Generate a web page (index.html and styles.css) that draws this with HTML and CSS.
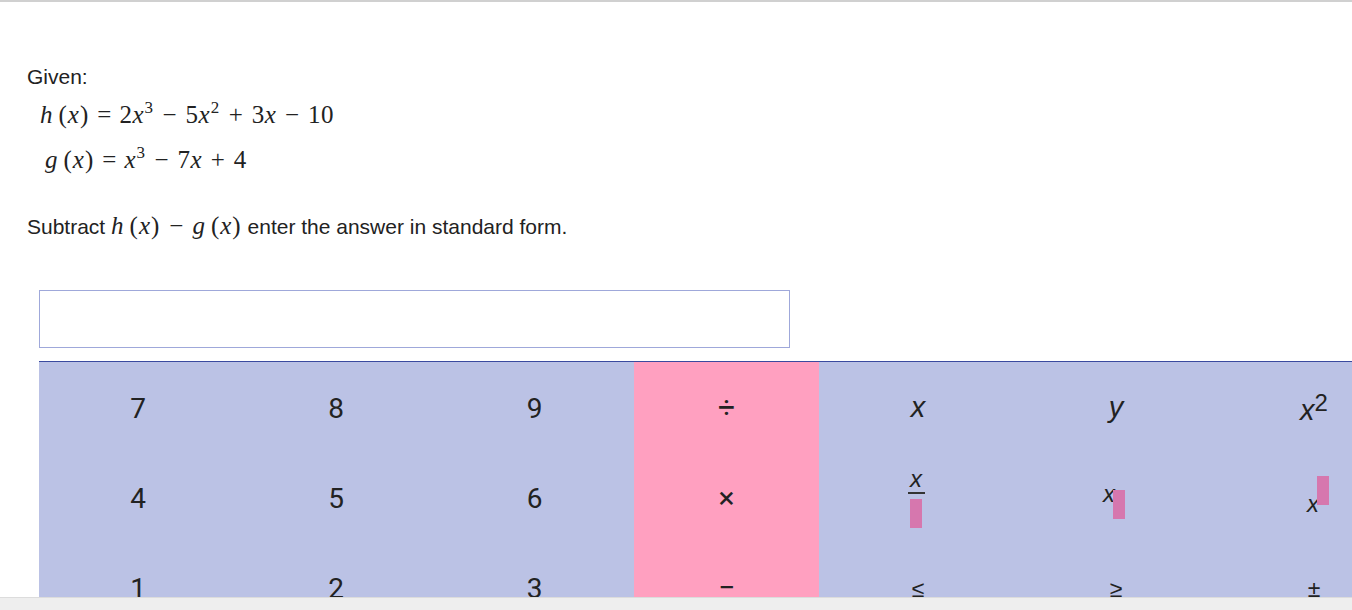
FILE: index.html
```html
<!DOCTYPE html>
<html>
<head>
<meta charset="utf-8">
<link rel="stylesheet" href="styles.css">
</head>
<body>
<div class="page">
  <p class="given">Given:</p>
  <div class="math-block">
    <div class="eq"><span class="mi">h</span><span class="sp"></span><span class="mo">(</span><span class="mi">x</span><span class="mo">)</span><span class="rel">=</span><span class="mn">2</span><span class="mi">x</span><sup class="mn">3</sup><span class="bin">−</span><span class="mn">5</span><span class="mi">x</span><sup class="mn">2</sup><span class="bin">+</span><span class="mn">3</span><span class="mi">x</span><span class="bin">−</span><span class="mn">10</span></div>
    <div class="eq eq-g"><span class="mi">g</span><span class="sp"></span><span class="mo">(</span><span class="mi">x</span><span class="mo">)</span><span class="rel">=</span><span class="mi">x</span><sup class="mn">3</sup><span class="bin">−</span><span class="mn">7</span><span class="mi">x</span><span class="bin">+</span><span class="mn">4</span></div>
  </div>
  <p class="task">Subtract <span class="inline-math"><span class="mi">h</span><span class="sp"></span><span class="mo">(</span><span class="mi">x</span><span class="mo">)</span><span class="bin">−</span><span class="mi">g</span><span class="sp"></span><span class="mo">(</span><span class="mi">x</span><span class="mo">)</span></span> enter the answer in standard form.</p>
  <div class="answer"></div>
  <div class="keypad">
    <div class="key num">7</div>
    <div class="key num">8</div>
    <div class="key num">9</div>
    <div class="key op">÷</div>
    <div class="key var">x</div>
    <div class="key var">y</div>
    <div class="key var"><span class="xsq">x<sup class="sup2">2</sup></span></div>

    <div class="key num">4</div>
    <div class="key num">5</div>
    <div class="key num">6</div>
    <div class="key op">×</div>
    <div class="key tmpl">
      <div class="frac">
        <span class="var-glyph">x</span>
        <span class="frac-bar"></span>
        <span class="slot"></span>
      </div>
    </div>
    <div class="key tmpl">
      <div class="subs"><span class="var-glyph">x</span><span class="slot slot-sub"></span></div>
    </div>
    <div class="key tmpl">
      <div class="sups"><span class="var-glyph">x</span><span class="slot slot-sup"></span></div>
    </div>

    <div class="key num">1</div>
    <div class="key num">2</div>
    <div class="key num">3</div>
    <div class="key op">−</div>
    <div class="key sym">≤</div>
    <div class="key sym">≥</div>
    <div class="key sym">±</div>
  </div>
</div>
<div class="hscroll"></div>
</body>
</html>
```
FILE: styles.css
```css
html, body {
  margin: 0;
  padding: 0;
  overflow: hidden;
  background: #fff;
}

body {
  font-family: "Liberation Sans", Arial, sans-serif;
  font-size: 21px;
  color: #222;
  width: 1352px;
  height: 610px;
}

.page {
  border-top: 2px solid #d0d0d0;
  padding: 63px 0 0 27px;
}

.given {
  margin: 0;
  line-height: 24px;
}

.math-block {
  margin-left: 13px;
  margin-top: 3px;
}

.eq {
  font-family: "Liberation Serif", "Times New Roman", serif;
  font-size: 25px;
  line-height: 45px;
  height: 45px;
  white-space: nowrap;
}

.eq-g {
  padding-left: 5px;
}

.mi {
  font-style: italic;
}

.mn, .mo {
  font-style: normal;
}

.mn {
  letter-spacing: 0.5px;
}

.sp {
  display: inline-block;
  width: 5px;
}

.mo {
  padding: 0 1px;
}

sup.mn {
  font-size: 17px;
  vertical-align: 10px;
  line-height: 0;
  margin-left: 1px;
}

.rel {
  padding: 0 8px;
}

.bin {
  padding: 0 9px;
}

.task {
  margin: 32px 0 0 0;
  line-height: 24px;
  white-space: nowrap;
}

.inline-math {
  font-family: "Liberation Serif", "Times New Roman", serif;
  font-size: 25px;
}

.answer {
  margin: 51px 0 0 12px;
  width: 749px;
  height: 56px;
  border: 1px solid #9fa8da;
  background: #fff;
}

.keypad {
  margin: 13px 0 0 12px;
  border-top: 1px solid #3a4a9f;
  display: grid;
  grid-template-columns: 198px 198px 199px 185px 198px 198px 198px;
  grid-auto-rows: 90px;
  width: 1374px;
  background: #bbc2e5;
}

.key {
  display: flex;
  align-items: center;
  justify-content: center;
  color: #222;
  font-family: Roboto, "Liberation Sans", sans-serif;
}

.key.op {
  background: #ffa0c0;
  font-size: 30px;
}

.num {
  font-size: 28px;
  padding-top: 2px;
}

.var {
  font-family: "Liberation Sans", Arial, sans-serif;
  font-style: italic;
  font-size: 29px;
}

.xsq {
  padding-top: 6px;
}

.sup2 {
  font-style: normal;
  font-size: 24px;
  vertical-align: 9px;
  line-height: 0;
}

.sym {
  font-family: "Liberation Sans", Arial, sans-serif;
  font-size: 23px;
  padding-top: 4px;
}

.var-glyph {
  font-family: "Liberation Sans", Arial, sans-serif;
  font-style: italic;
  font-size: 24px;
  line-height: 18px;
}

.slot {
  display: block;
  width: 12px;
  height: 29px;
  background: #d677ae;
}

.frac {
  display: flex;
  flex-direction: column;
  align-items: center;
  padding-top: 4px;
  margin-left: -4px;
}

.frac-bar {
  display: block;
  width: 17px;
  height: 2px;
  background: #333;
  margin: 4px 0 5px;
}

.subs {
  display: flex;
  align-items: flex-start;
  padding-top: 14px;
  margin-left: -4px;
}

.subs .var-glyph {
  margin-top: -5px;
}

.slot-sub {
  margin-left: -2px;
}

.sups {
  display: flex;
  align-items: flex-end;
  margin-left: 8px;
  margin-top: -10px;
}

.sups .var-glyph {
  margin-bottom: -4px;
}

.slot-sup {
  margin-left: -2px;
  margin-bottom: 4px;
}

.hscroll {
  position: fixed;
  left: 0;
  right: 0;
  bottom: 0;
  height: 12px;
  background: #eeeeee;
  border-top: 1px solid #dcdcdc;
}
```
